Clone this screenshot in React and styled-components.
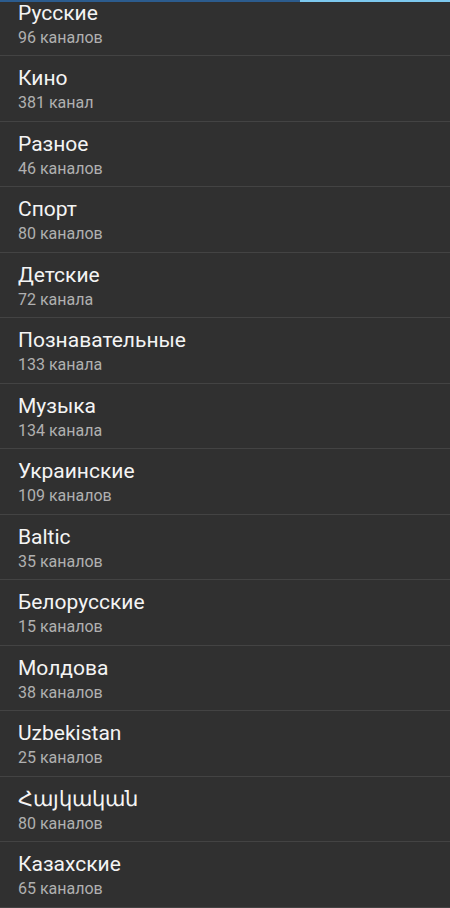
import styled, { createGlobalStyle } from 'styled-components'

const groups = [
  ['Русские', '96 каналов'],
  ['Кино', '381 канал'],
  ['Разное', '46 каналов'],
  ['Спорт', '80 каналов'],
  ['Детские', '72 канала'],
  ['Познавательные', '133 канала'],
  ['Музыка', '134 канала'],
  ['Украинские', '109 каналов'],
  ['Baltic', '35 каналов'],
  ['Белорусские', '15 каналов'],
  ['Молдова', '38 каналов'],
  ['Uzbekistan', '25 каналов'],
  ['Հայկական', '80 каналов'],
  ['Казахские', '65 каналов'],
]

const App = () => {
  return (
    <Screen>
      <GlobalStyle />
      <Progress>
        <ProgressFill />
      </Progress>
      <List>
        {groups.map(([title, count]) => (
          <Row key={title}>
            <Title>{title}</Title>
            <Count>{count}</Count>
          </Row>
        ))}
      </List>
    </Screen>
  )
}

// Styles

const GlobalStyle = createGlobalStyle`
    html, body {
        margin: 0;
        padding: 0;
        background: #303030;
    }
`

const Screen = styled.div`
    position: relative;
    width: 450px;
    height: 908px;
    overflow: hidden;
    background: #303030;
    font-family: Roboto, "Noto Sans", sans-serif;
`

const Progress = styled.div`
    position: absolute;
    top: 0;
    left: 0;
    right: 0;
    height: 2px;
    background: #7cc8ee;
    z-index: 2;
`

const ProgressFill = styled.div`
    width: 300px;
    height: 100%;
    background: #2c5c8e;
`

const List = styled.div`
    display: flex;
    flex-direction: column;
    margin-top: -9.5px;
`

const Row = styled.div`
    box-sizing: border-box;
    height: 65.5px;
    padding: 10px 18px 0;
    border-bottom: 1.5px solid #434343;
    display: flex;
    flex-direction: column;
`

const Title = styled.div`
    font-size: 21px;
    line-height: 24px;
    color: #f4f4f4;
`

const Count = styled.div`
    margin-top: 2px;
    font-size: 16px;
    line-height: 21px;
    color: #b0b0b0;
`

export default App
